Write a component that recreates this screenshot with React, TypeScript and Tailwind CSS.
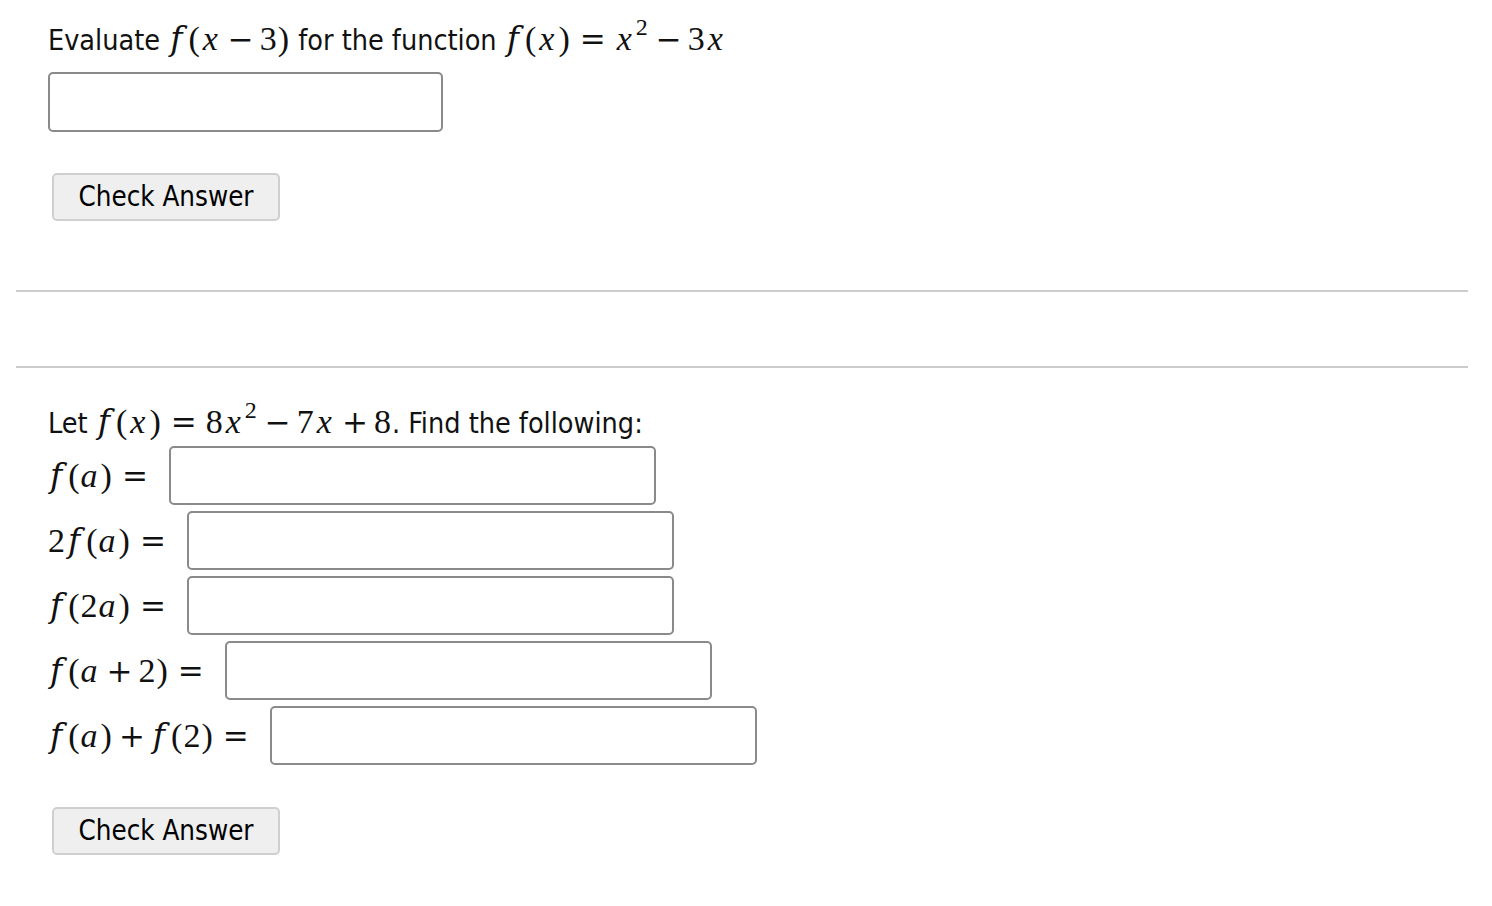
import React from "react";

const sans = "font-['DejaVu_Sans_Condensed','DejaVu_Sans',sans-serif]";
const serif = "font-['Liberation_Serif','DejaVu_Serif',serif]";

const V: React.FC<{ children: React.ReactNode }> = ({ children }) => (
  <span className="italic mr-[2px]">{children}</span>
);

// x is wider in the math font of the original
const X: React.FC = () => <span className="italic ml-[2px] mr-[3px]">x</span>;

// function name f, with the italic correction after it
const F: React.FC = () => (
  <span className="font-['DejaVu_Serif',serif] italic text-[33px] ml-[2px] mr-[5px]">f</span>
);

const Op: React.FC<{ children: React.ReactNode }> = ({ children }) => (
  <span className="font-['DejaVu_Serif',serif] text-[31px] tracking-normal">{children}</span>
);

const Rel: React.FC<{ children: React.ReactNode }> = ({ children }) => (
  <span className="mx-[9px]">
    <Op>{children}</Op>
  </span>
);

const Bin: React.FC<{ children: React.ReactNode }> = ({ children }) => (
  <span className="mx-[6px]">
    <Op>{children}</Op>
  </span>
);

const M: React.FC<{ children: React.ReactNode }> = ({ children }) => (
  <span className={`${serif} text-[34px] whitespace-nowrap tracking-[1px]`}>{children}</span>
);

const Sq: React.FC = () => (
  <sup className="text-[24px] not-italic relative top-[-15px] mr-[1px]">2</sup>
);

const Field: React.FC<{ className?: string }> = ({ className }) => (
  <input
    type="text"
    className={`h-[59px] border-2 border-[#8a8a8a] rounded-[5px] bg-white outline-none ${className ?? ""}`}
  />
);

const CheckButton: React.FC = () => (
  <button className="ml-[4px] w-[228px] h-[48px] bg-[#efefef] border-2 border-[#cfcfcf] rounded-[5px] text-[27.5px] text-black">
    Check Answer
  </button>
);

const Row: React.FC<{ label: React.ReactNode }> = ({ label }) => (
  <div className="flex items-center h-[59px] mb-[6px]">
    <M>{label}</M>
    <Field className="ml-[12px] w-[487px]" />
  </div>
);

export default function App() {
  return (
    <div className={`${sans} text-[28.5px] text-[#111] bg-white min-h-[906px] pl-4 pr-6`}>
      <div className="pl-8 pt-[17px]">
        <p className="leading-[44px] whitespace-nowrap">
          Evaluate{" "}
          <M>
            <F />(<X />
            <Bin>−</Bin>3)
          </M>{" "}
          for the function{" "}
          <M>
            <F />(<X />)<Rel>=</Rel>
            <X />
            <Sq />
            <Bin>−</Bin>3<X />
          </M>
        </p>
        <Field className="mt-[9px] w-[395px] h-[60px] block" />
        <div className="mt-[41px]">
          <CheckButton />
        </div>
      </div>

      <hr className="mt-[69px] border-0 h-[2px] bg-[#cccccc]" />
      <div className="h-[74px]" />
      <hr className="border-0 h-[2px] bg-[#cccccc]" />

      <div className="pl-8 pt-[34px]">
        <p className="leading-[40px] whitespace-nowrap mb-[2px]">
          Let{" "}
          <M>
            <F />(<X />)<Rel>=</Rel>8<X />
            <Sq />
            <Bin>−</Bin>7<X />
            <Bin>+</Bin>8
          </M>
          . Find the following:
        </p>
        <Row
          label={
            <>
              <F />(<V>a</V>)<Rel>=</Rel>
            </>
          }
        />
        <Row
          label={
            <>
              2<F />(<V>a</V>)<Rel>=</Rel>
            </>
          }
        />
        <Row
          label={
            <>
              <F />(2<V>a</V>)<Rel>=</Rel>
            </>
          }
        />
        <Row
          label={
            <>
              <F />(<V>a</V>
              <Bin>+</Bin>2)<Rel>=</Rel>
            </>
          }
        />
        <Row
          label={
            <>
              <F />(<V>a</V>)<Bin>+</Bin>
              <F />(2)<Rel>=</Rel>
            </>
          }
        />
        <div className="mt-[42px]">
          <CheckButton />
        </div>
      </div>
    </div>
  );
}
